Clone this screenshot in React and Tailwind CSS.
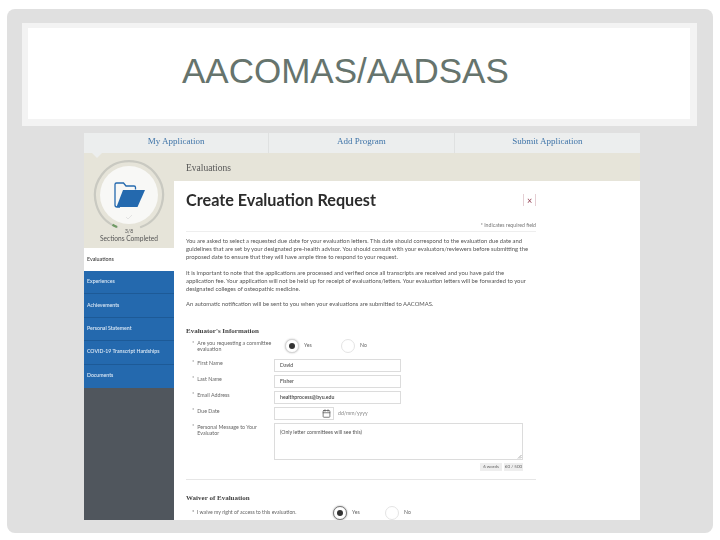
import { Calendar } from 'lucide-react';

const tabs = ['My Application', 'Add Program', 'Submit Application'];
const sideLinks = ['Experiences', 'Achievements', 'Personal Statement', 'COVID-19 Transcript Hardships', 'Documents'];

const Radio = ({ on, dark }) => (
  <span className={`flex items-center justify-center w-[14px] h-[14px] rounded-full bg-white shrink-0 ${dark ? 'border border-[#777] shadow-[0_0_2px_#999]' : on ? 'border border-[#d5d5d5] shadow-[0_0_2px_#bbb]' : 'border border-[#e4e4e4]'}`}>
    {on && <span className="w-[6px] h-[6px] rounded-full bg-[#333]" />}
  </span>
);

const Label = ({ children }) => (
  <div className="flex gap-[3px] w-[82px] shrink-0 text-[5.300px] leading-[6px] text-[#666]">
    <span className="text-[#888]">*</span>
    <span>{children}</span>
  </div>
);

const Field = ({ label, value, strong }) => (
  <div className="flex h-[16px] pl-[6px]">
    <Label><span className="block pt-[1px]">{label}</span></Label>
    <div className={`w-[127px] h-[13px] border border-[#dcdcdc] flex items-center px-[5px] text-[5.200px] text-[#444] ${strong ? 'font-semibold' : ''}`}>{value}</div>
  </div>
);

const CircleBadge = () => (
  <svg width="74" height="74" viewBox="0 0 74 74" className="mx-auto">
    <circle cx="37" cy="37" r="29" fill="#f8f8f6" />
    <path d="M25 69 A34 34 0 1 1 49 69" fill="none" stroke="#c9c9c1" strokeWidth="2.200" strokeLinecap="round" />
    <path d="M20.500 66.700 A34 34 0 0 0 25 69" fill="none" stroke="#6f9a64" strokeWidth="2.200" />
    <path d="M28 49 h-3 a2 2 0 0 1 -2 -2 v-20.500 a1.500 1.500 0 0 1 1.500 -1.500 h7 l2.500 3 h8 a1.500 1.500 0 0 1 1.500 1.500 v2" fill="none" stroke="#2469ae" strokeWidth="1.300" />
    <path d="M31 32 h22 l-7.500 17 h-21 z" fill="#2469ae" />
    <path d="M34 59 l2 2 l4 -4" fill="none" stroke="#ddd" strokeWidth="0.800" />
  </svg>
);

export default function App() {
  return (
    <div className="w-[720px] h-[540px] bg-white pt-[9px] pl-[7px] overflow-hidden font-['Lato',sans-serif]">
      <div className="w-[706px] h-[524px] bg-[#e0e0e0] rounded-[8px] pt-[14px] pl-[15px]">
        {/* title band */}
        <div className="w-[675px] h-[103px] bg-white border-[#f3f3f3] border-t-[5px] border-l-[6px] border-r-[7px] border-b-[7px] pl-[154px] pt-[21px]">
          <h1 className="font-['Liberation_Sans',sans-serif] text-[35px] leading-[44px] text-[#66746d] whitespace-nowrap">AACOMAS/AADSAS</h1>
        </div>

        {/* screenshot of the application */}
        <div className="relative ml-[62px] mt-[7px] w-[556px] h-[387px] bg-white overflow-hidden blur-[0.4px]">
          <div className="grid grid-cols-3 h-[20px] bg-[#eceeee]">
            {tabs.map((t, i) => (
              <div key={t} className={`flex items-center justify-center pb-[2px] font-['Liberation_Serif',serif] text-[9px] text-[#3f74a8] ${i < 2 ? 'border-r border-[#dfe1e1]' : ''}`}>{t}</div>
            ))}
          </div>
          <div className="absolute left-[8px] top-[20px] w-0 h-0 border-l-[5px] border-r-[5px] border-t-[5px] border-l-transparent border-r-transparent border-t-[#eceeee]" />

          <div className="flex h-[367px] bg-[#e6e4d9]">
            {/* sidebar */}
            <div className="w-[90px] shrink-0 flex flex-col">
              <div className="h-[95px] flex flex-col pt-[5px]">
                <CircleBadge />
                <div className="text-center text-[5px] leading-[5px] -mt-[3px] text-[#555]">3/8</div>
                <div className="text-center text-[6.600px] leading-[9px] text-[#555] whitespace-nowrap">Sections Completed</div>
              </div>
              <div className="h-[23px] bg-white flex items-center pl-[3px] text-[5.300px] font-semibold text-[#444]">Evaluations</div>
              <div className="bg-[#2469ae]">
                {sideLinks.map((l) => (
                  <div key={l} className="h-[23.400px] flex items-center pl-[3px] text-[5.200px] font-semibold text-[#dbe8f5] whitespace-nowrap border-b border-[#1d5a97] last:border-b-0">{l}</div>
                ))}
              </div>
              <div className="flex-1 bg-[#50565d]" />
            </div>

            {/* main column */}
            <div className="flex-1 flex flex-col min-w-0">
              <div className="h-[28px] flex items-center pl-[12px] pt-[2px] font-['Liberation_Serif',serif] text-[9.500px] text-[#555]">Evaluations</div>
              <div className="flex-1 bg-white pl-[12px] pt-[9px] w-full">
                <div className="w-[350px]">
                  <div className="flex items-center justify-between h-[20px]">
                    <h2 className="text-[16.200px] font-bold text-[#2c2c2c] whitespace-nowrap">Create Evaluation Request</h2>
                    <div className="w-[13px] h-[12px] border-x border-[#e5cfd4] flex items-center justify-center text-[9px] leading-none text-[#8e3a4c]">×</div>
                  </div>
                  <div className="mt-[12px] h-[10px] border-b border-[#eeeeee] text-right text-[5.200px] leading-[7px] text-[#777]">* Indicates required field</div>

                  <div className="mt-[5px] text-[5.850px] leading-[8px] text-[#555] whitespace-nowrap">
                    <p>You are asked to select a requested due date for your evaluation letters. This date should correspond to the evaluation due date and</p>
                    <p>guidelines that are set by your designated pre-health advisor. You should consult with your evaluators/reviewers before submitting the</p>
                    <p>proposed date to ensure that they will have ample time to respond to your request.</p>
                    <p className="mt-[7.500px]">It is important to note that the applications are processed and verified once all transcripts are received and you have paid the</p>
                    <p>application fee. Your application will not be held up for receipt of evaluations/letters. Your evaluation letters will be forwarded to your</p>
                    <p>designated colleges of osteopathic medicine.</p>
                    <p className="mt-[7.500px]">An automatic notification will be sent to you when your evaluations are submitted to AACOMAS.</p>
                  </div>

                  <h3 className="mt-[18px] font-['Liberation_Serif',serif] font-bold text-[7px] leading-[11px] text-[#444]">Evaluator's Information</h3>

                  <div className="flex items-center h-[16px] mt-[1px] pl-[6px]">
                    <Label>Are you requesting a committee evaluation</Label>
                    <div className="ml-[11px]"><Radio on /></div>
                    <span className="ml-[5px] w-[37px] text-[5.200px] text-[#666]">Yes</span>
                    <Radio />
                    <span className="ml-[5px] text-[5.200px] text-[#666]">No</span>
                  </div>

                  <div className="mt-[5px]">
                    <Field label="First Name" value="David" />
                    <Field label="Last Name" value="Fisher" />
                    <Field label="Email Address" value="healthprocess@byu.edu" strong />
                    <div className="flex h-[16px] pl-[6px]">
                      <Label><span className="block pt-[1px]">Due Date</span></Label>
                      <div className="w-[60px] h-[13px] border border-[#dcdcdc] flex items-center justify-end pr-[2px]">
                        <Calendar size={9} className="text-[#555]" strokeWidth={2} />
                      </div>
                      <span className="ml-[4px] pt-[3px] text-[5.200px] leading-[6px] text-[#888]">dd/mm/yyyy</span>
                    </div>
                    <div className="flex pl-[6px]">
                      <Label><span className="block pt-[1px] w-[70px]">Personal Message to Your Evaluator</span></Label>
                      <div className="relative w-[249px] h-[37px] border border-[#dcdcdc] px-[5px] pt-[5px] text-[5.200px] leading-[7px] text-[#555]">
                        (Only letter committees will see this)
                        <svg width="5" height="5" viewBox="0 0 5 5" className="absolute right-0 bottom-0">
                          <path d="M1 4.500 L4.500 1 M3 4.500 L4.500 3" stroke="#777" strokeWidth="0.600" />
                        </svg>
                      </div>
                    </div>
                  </div>

                  <div className="flex justify-end gap-[2px] mt-[3px] pr-[13px]">
                    <span className="w-[22px] h-[8px] bg-[#eeeeee] text-center text-[4.500px] leading-[8px] text-[#666]">6 words</span>
                    <span className="w-[19px] h-[8px] bg-[#eeeeee] text-center text-[4.500px] leading-[8px] text-[#666]">60 / 500</span>
                  </div>
                  <div className="mt-[8px] border-t border-[#e6e6e6]" />

                  <h3 className="mt-[13px] font-['Liberation_Serif',serif] font-bold text-[7px] leading-[11px] text-[#444]">Waiver of Evaluation</h3>
                  <div className="flex items-center h-[14px] mt-[2px] pl-[6px]">
                    <div className="w-[141px] text-[5.200px] text-[#666] whitespace-nowrap">* &nbsp;I waive my right of access to this evaluation.</div>
                    <Radio on dark />
                    <span className="ml-[5px] w-[33px] text-[5.200px] text-[#666]">Yes</span>
                    <Radio />
                    <span className="ml-[5px] text-[5.200px] text-[#666]">No</span>
                  </div>
                </div>
              </div>
            </div>
          </div>
        </div>
      </div>
    </div>
  );
}
